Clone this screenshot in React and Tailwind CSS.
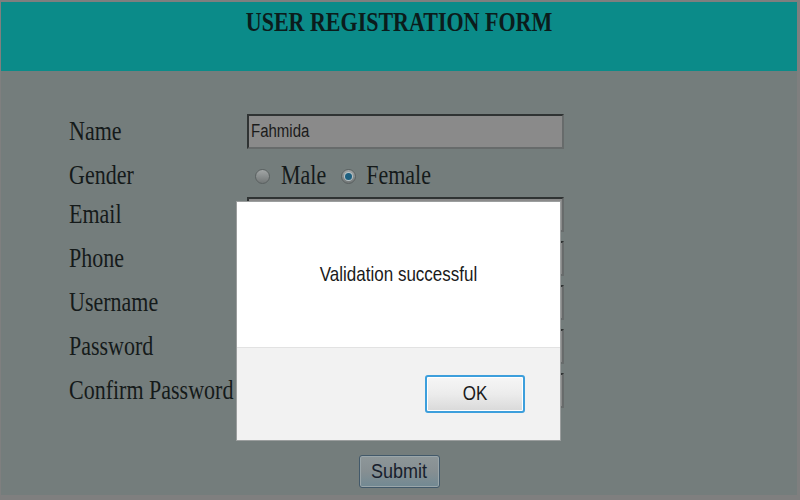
import React from 'react';

const serif = { fontFamily: '"Liberation Serif", "Times New Roman", serif' };

const Label = ({ children, className = '' }) => (
    <div className={`flex items-center text-[22px] leading-none text-[#151a1a] ${className}`} style={serif}>
        <span className="inline-block scale-y-[1.2]">{children}</span>
    </div>
);

const Field = ({ value }) => (
    <div className="h-[35px] w-[317px] bg-[#8a8a8a] border-2 border-t-[#2f3333] border-l-[#2f3333] border-b-[#676b6b] border-r-[#676b6b] flex items-center pl-[2px] text-[15px] text-[#1b1b1b] font-['Liberation_Sans',Arial,sans-serif]">
        <span className="inline-block scale-y-[1.2]">{value}</span>
    </div>
);

const Radio = ({ checked }) => (
    <span className="w-[15px] h-[15px] rounded-full border border-[#5a6060] bg-linear-to-b from-[#a2a6a6] to-[#727777] flex items-center justify-center">
        {checked && <span className="w-[7px] h-[7px] rounded-full bg-[#1d5f7f] ring-1 ring-[#b9c4c7]" />}
    </span>
);

const App = () => {
    return (
        <div className="relative h-[500px] w-[800px] overflow-hidden bg-[#7f7f7f] pt-[2px] pl-[1px] pr-[3px] pb-[5px]">
            <div className="h-full flex flex-col bg-[#747d7c]">
                <header className="h-[69px] bg-[#0b8b89] flex justify-center pt-[9px]">
                    <h1 className="inline-block h-fit scale-y-[1.25] text-[22px] leading-none font-bold text-[#0b1c1c]" style={serif}>
                        USER REGISTRATION FORM
                    </h1>
                </header>

                <form className="pt-[43px] pl-[68px]">
                    <div className="grid grid-cols-[178px_317px] gap-y-[9px]">
                        <Label>Name</Label>
                        <Field value="Fahmida" />

                        <Label className="h-[30px] pt-[6px]">Gender</Label>
                        <div className="h-[30px] pt-[6px] flex items-center pl-[8px] text-[22px] leading-none text-[#151a1a]" style={serif}>
                            <Radio />
                            <span className="inline-block scale-y-[1.2] ml-[11px] mr-[15px]">Male</span>
                            <Radio checked />
                            <span className="inline-block scale-y-[1.2] ml-[10px]">Female</span>
                        </div>

                        <Label>Email</Label>
                        <Field value="" />

                        <Label>Phone</Label>
                        <Field value="" />

                        <Label>Username</Label>
                        <Field value="" />

                        <Label>Password</Label>
                        <Field value="" />

                        <Label>Confirm Password</Label>
                        <Field value="" />
                    </div>
                </form>

                <div className="mt-[47px] flex justify-center">
                    <button
                        type="button"
                        className="w-[81px] h-[33px] rounded-[3px] border border-[#42596a] shadow-[inset_0_0_0_1px_#9aa6aa] bg-linear-to-b from-[#8e9799] via-[#868f92] to-[#718993] text-[18px] text-[#17202c] font-['Liberation_Sans',Arial,sans-serif]"
                    >
                        <span className="inline-block scale-y-[1.15]">Submit</span>
                    </button>
                </div>
            </div>

            {/* alert dialog */}
            <div className="absolute left-[236px] top-[201px] w-[325px] h-[240px] bg-white border border-[#9b9e9e] flex flex-col font-['Liberation_Sans',Arial,sans-serif]">
                <div className="h-[145px] flex items-center justify-center text-[17px] text-[#1a1a1a]">
                    <span className="inline-block scale-y-[1.2]">Validation successful</span>
                </div>
                <div className="flex-1 bg-[#f2f2f2] border-t border-[#e2e2e2] flex items-center justify-end pr-[35px]">
                    <button
                        type="button"
                        className="w-[100px] h-[38px] rounded-[3px] border-2 border-[#3d9fdc] shadow-[inset_0_0_0_1px_#ffffff] bg-linear-to-b from-[#f6f6f6] via-[#ececec] to-[#d9d9d9] text-[17px] text-[#1a1a1a]"
                    >
                        <span className="inline-block scale-y-[1.2]">OK</span>
                    </button>
                </div>
            </div>
        </div>
    );
};

export default App;
